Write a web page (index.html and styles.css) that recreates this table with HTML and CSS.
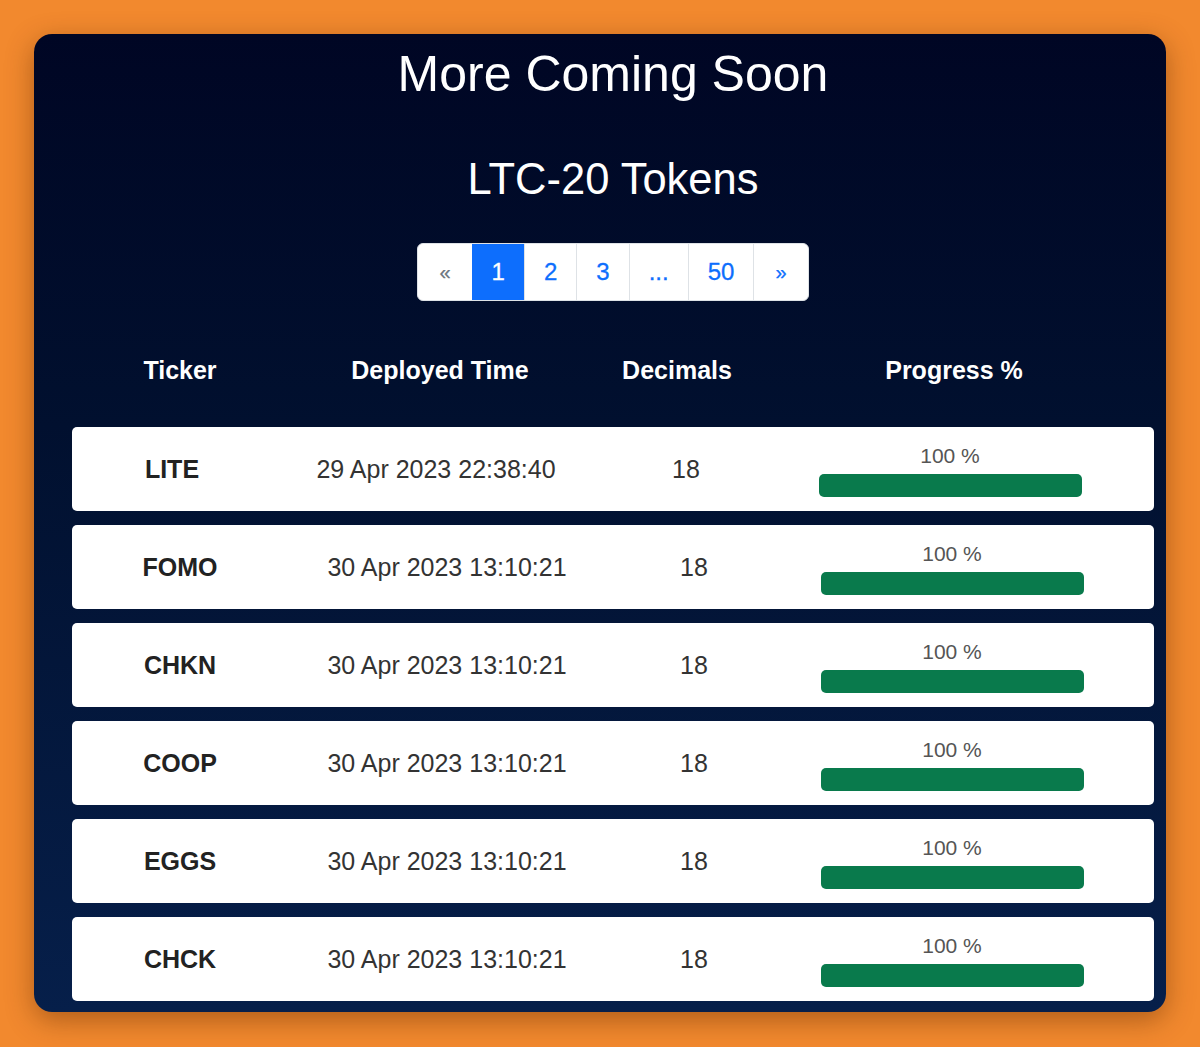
FILE: index.html
```html
<!DOCTYPE html>
<html lang="en">
<head>
<meta charset="utf-8">
<title>LTC-20 Tokens</title>
<link rel="stylesheet" href="styles.css">
</head>
<body>
<main class="panel">
  <h1 class="title">More Coming Soon</h1>
  <h2 class="subtitle">LTC-20 Tokens</h2>
  <nav class="pager">
    <span class="pager__item pager__item--disabled">&laquo;</span>
    <span class="pager__item pager__item--active">1</span>
    <span class="pager__item">2</span>
    <span class="pager__item">3</span>
    <span class="pager__item">...</span>
    <span class="pager__item">50</span>
    <span class="pager__item">&raquo;</span>
  </nav>
  <div class="table">
    <div class="thead">
      <div class="th">Ticker</div>
      <div class="th">Deployed Time</div>
      <div class="th">Decimals</div>
      <div class="th">Progress %</div>
    </div>
    <div class="tbody">
      <div class="tr tr--first">
        <div class="td td--ticker">LITE</div>
        <div class="td">29 Apr 2023 22:38:40</div>
        <div class="td">18</div>
        <div class="td td--progress"><span class="pct">100 %</span><span class="bar"><span class="bar__fill" style="width:100%"></span></span></div>
      </div>
      <div class="tr">
        <div class="td td--ticker">FOMO</div>
        <div class="td">30 Apr 2023 13:10:21</div>
        <div class="td">18</div>
        <div class="td td--progress"><span class="pct">100 %</span><span class="bar"><span class="bar__fill" style="width:100%"></span></span></div>
      </div>
      <div class="tr">
        <div class="td td--ticker">CHKN</div>
        <div class="td">30 Apr 2023 13:10:21</div>
        <div class="td">18</div>
        <div class="td td--progress"><span class="pct">100 %</span><span class="bar"><span class="bar__fill" style="width:100%"></span></span></div>
      </div>
      <div class="tr">
        <div class="td td--ticker">COOP</div>
        <div class="td">30 Apr 2023 13:10:21</div>
        <div class="td">18</div>
        <div class="td td--progress"><span class="pct">100 %</span><span class="bar"><span class="bar__fill" style="width:100%"></span></span></div>
      </div>
      <div class="tr">
        <div class="td td--ticker">EGGS</div>
        <div class="td">30 Apr 2023 13:10:21</div>
        <div class="td">18</div>
        <div class="td td--progress"><span class="pct">100 %</span><span class="bar"><span class="bar__fill" style="width:100%"></span></span></div>
      </div>
      <div class="tr">
        <div class="td td--ticker">CHCK</div>
        <div class="td">30 Apr 2023 13:10:21</div>
        <div class="td">18</div>
        <div class="td td--progress"><span class="pct">100 %</span><span class="bar"><span class="bar__fill" style="width:100%"></span></span></div>
      </div>
    </div>
  </div>
</main>
</body>
</html>
```
FILE: styles.css
```css
* { box-sizing: border-box; }
html, body { margin: 0; }
body {
  background: #f2892e;
  padding: 34px;
  height: 1047px;
  overflow: hidden;
  font-family: "Liberation Sans", Arial, Helvetica, sans-serif;
}
.panel {
  width: 1132px;
  height: 978px;
  border-radius: 18px;
  overflow: hidden;
  background: linear-gradient(180deg, #000624 0%, #01102f 40%, #061f4a 100%);
  box-shadow: 0 8px 28px rgba(90, 40, 0, 0.45);
  padding: 11px 12px 0 38px;
  display: flex;
  flex-direction: column;
  align-items: stretch;
}
.title {
  margin: 0;
  font-size: 50px;
  line-height: 58px;
  font-weight: 400;
  color: #fff;
  text-align: center;
}
.subtitle {
  margin: 50px 0 0;
  font-size: 43.5px;
  line-height: 52px;
  font-weight: 400;
  color: #fff;
  text-align: center;
}
.pager {
  margin: 38px auto 0;
  align-self: center;
  display: flex;
  background: #fff;
  border: 1px solid #dee2e6;
  border-radius: 6px;
  overflow: hidden;
}
.pager__item {
  font-size: 24px;
  line-height: 36px;
  padding: 10px 19px;
  color: #0d6efd;
  border-left: 1px solid #dee2e6;
  text-align: center;
  -webkit-text-stroke: 0.3px currentColor;
}
.pager__item:first-child { border-left: 0; }
.pager__item--disabled { color: #6c757d; font-size: 20px; padding: 10px 21px; }
.pager__item--active { background: #0d6efd; color: #fff; border-left-color: #0d6efd; }
.pager__item:last-child { font-size: 20px; padding: 10px 21px; }
.table { margin-top: 40px; }
.thead {
  display: grid;
  grid-template-columns: 216px 304px 170px 384px;
  height: 58px;
  align-items: center;
  color: #fff;
  font-weight: 700;
  font-size: 25px;
  text-align: center;
}
.tbody {
  margin-top: 28px;
  display: flex;
  flex-direction: column;
  gap: 14px;
}
.tr {
  display: grid;
  grid-template-columns: 216px 318px 176px 340px;
  height: 84px;
  align-items: center;
  background: #fff;
  border-radius: 5px;
  width: 1082px;
  font-size: 25px;
  color: #333;
  text-align: center;
}
.tr--first { grid-template-columns: 200px 328px 172px 356px; }
.td--ticker { font-weight: 700; color: #222; }
.td--progress {
  align-self: start;
  padding-top: 18px;
  display: flex;
  flex-direction: column;
  align-items: center;
}
.pct {
  font-size: 21px;
  line-height: 22px;
  color: #555;
  margin-bottom: 7px;
}
.bar {
  display: block;
  width: 263px;
  height: 23px;
  border-radius: 5px;
  background: #e9ecef;
  overflow: hidden;
}
.bar__fill {
  display: block;
  height: 100%;
  background: #097a4c;
}
```
